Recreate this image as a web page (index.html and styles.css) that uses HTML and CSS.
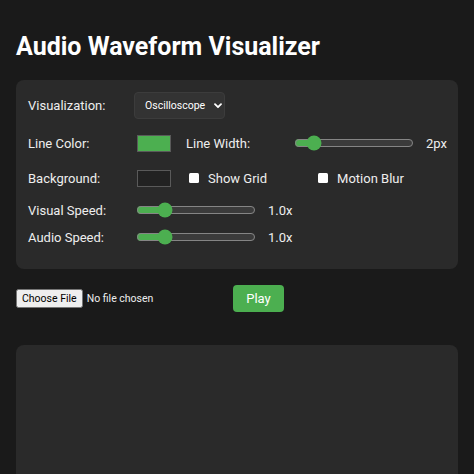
FILE: index.html
```
<!DOCTYPE html>
<html lang="en">
<head>
<meta charset="utf-8">
<title>Audio Waveform Visualizer</title>
<link rel="stylesheet" href="styles.css">
</head>
<body>
<div class="app">
  <h1 class="title">Audio Waveform Visualizer</h1>
  <div class="panel controls">
    <div class="row row-1">
      <label class="label" for="viz">Visualization:</label>
      <div class="select-wrap">
        <select id="viz" class="select">
          <option>Oscilloscope</option>
          <option>Frequency Bars</option>
          <option>Circular</option>
        </select>
        <svg class="chevron" width="8" height="6" viewBox="0 0 8 6" aria-hidden="true"><path d="M1 1.2 L4 4.2 L7 1.2" fill="none" stroke="#ffffff" stroke-width="1.8" stroke-linecap="round" stroke-linejoin="round"/></svg>
      </div>
    </div>
    <div class="row row-2">
      <label class="label" for="lineColor">Line Color:</label>
      <input id="lineColor" class="color" type="color" value="#4caf50">
      <label class="label" for="lineWidth">Line Width:</label>
      <input id="lineWidth" class="range" type="range" min="1" max="10" value="2">
      <span class="value">2px</span>
    </div>
    <div class="row row-3">
      <label class="label" for="bgColor">Background:</label>
      <input id="bgColor" class="color" type="color" value="#222222">
      <label class="check check-grid"><input class="checkbox" type="checkbox">Show Grid</label>
      <label class="check check-blur"><input class="checkbox" type="checkbox">Motion Blur</label>
    </div>
    <div class="row row-4">
      <label class="label" for="vspeed">Visual Speed:</label>
      <input id="vspeed" class="range range-speed" type="range" min="0" max="5" step="0.1" value="1">
      <span class="value">1.0x</span>
    </div>
    <div class="row row-5">
      <label class="label" for="aspeed">Audio Speed:</label>
      <input id="aspeed" class="range range-speed" type="range" min="0" max="5" step="0.1" value="1">
      <span class="value">1.0x</span>
    </div>
  </div>
  <div class="file-row">
    <input class="file" type="file" accept="audio/*">
    <button class="play" type="button">Play</button>
  </div>
  <div class="panel canvas-wrap">
    <canvas class="canvas" width="442" height="300"></canvas>
  </div>
</div>
</body>
</html>
```
FILE: styles.css
```
html, body {
  margin: 0;
  padding: 0;
  background: #1a1a1a;
}
body {
  font-family: Roboto, "Liberation Sans", Arial, sans-serif;
  color: #eeeeee;
  font-size: 13px;
}
.app {
  padding: 16px;
}
.title {
  margin: 16px 0 18px;
  font-size: 25px;
  font-weight: 700;
  color: #ffffff;
  line-height: 30px;
}
.panel {
  background: #2a2a2a;
  border-radius: 8px;
}
.controls {
  padding: 12px 12px 22px;
}
.row {
  display: flex;
  align-items: center;
}
.row > * {
  flex: none;
}
.row-1 { height: 27px; }
.row-2 { height: 28px; margin-top: 10px; }
.row-3 { height: 20px; margin-top: 11px; }
.row-4 { height: 20px; margin-top: 12px; }
.row-5 { height: 20px; margin-top: 7px; }
.label {
  width: 100px;
  margin-right: 6px;
}
.select-wrap {
  position: relative;
  width: 91px;
  height: 27px;
}
.select {
  -webkit-appearance: none;
  appearance: none;
  width: 91px;
  height: 27px;
  background: #333333;
  color: #ffffff;
  border: 1px solid #3c3c3c;
  border-radius: 4px;
  font-family: Roboto, sans-serif;
  font-size: 10.5px;
  padding: 0 14px 0 10px;
  margin: 0;
}
.chevron {
  position: absolute;
  left: 80px;
  top: 11px;
  pointer-events: none;
}
.color {
  -webkit-appearance: none;
  appearance: none;
  box-sizing: border-box;
  width: 34px;
  height: 17px;
  padding: 0;
  margin: 0 15px 0 3px;
  border: none;
  background: transparent;
  cursor: pointer;
}
.color::-webkit-color-swatch-wrapper {
  padding: 0;
}
.color::-webkit-color-swatch {
  border: 1px solid #5a5a5a;
  border-radius: 0;
}
.range {
  width: 120px;
  margin: 0 2px;
  accent-color: #4caf50;
  color-scheme: dark;
}
.value {
  margin-left: 10px;
}
.check {
  display: flex;
  align-items: center;
}
.checkbox {
  -webkit-appearance: none;
  appearance: none;
  width: 10px;
  height: 10px;
  background: #ffffff;
  border: none;
  border-radius: 1.5px;
  margin: 0 9px 0 3px;
}
.checkbox:checked {
  background: #4caf50;
}
.check-blur {
  margin-left: 48px;
}
.file-row {
  display: flex;
  align-items: center;
  gap: 4px;
  margin: 16px 0 33px;
}
.file {
  width: 213px;
  font-family: Roboto, sans-serif;
  font-size: 10.5px;
  color: #eeeeee;
}
.file::file-selector-button {
  font-family: Roboto, sans-serif;
  font-size: 10.5px;
  padding: 1px 4px;
  margin-right: 4px;
}
.play {
  background: #4caf50;
  color: #ffffff;
  border: none;
  border-radius: 4px;
  font-family: Roboto, sans-serif;
  font-size: 13px;
  padding: 0 13px;
  height: 27px;
  width: 51px;
}
.canvas-wrap {
  overflow: hidden;
}
.canvas {
  display: block;
  width: 100%;
  height: 300px;
}
```
